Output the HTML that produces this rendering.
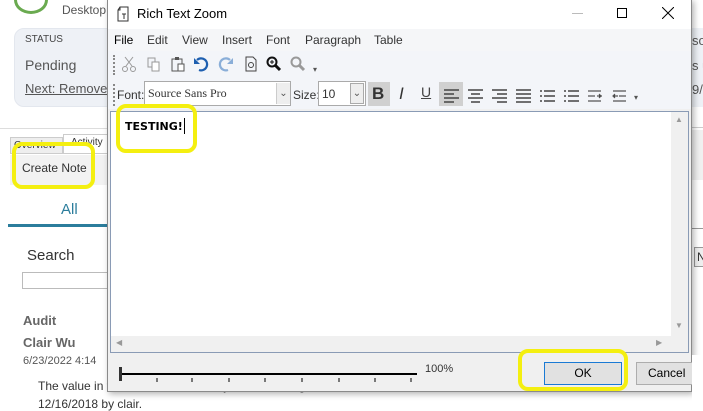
<!DOCTYPE html>
<html><head><meta charset="utf-8"><style>
*{margin:0;padding:0;box-sizing:border-box}
body{width:703px;height:409px;overflow:hidden;background:#fff;font-family:"Liberation Sans",sans-serif;position:relative;color:#333}
.a{position:absolute;white-space:nowrap}
.hl{position:absolute;border:4px solid #f4ef10;border-radius:10px}
.ic{position:absolute;top:56px;width:16px;height:16px}
.tb{position:absolute;top:86px;height:20px}
</style></head><body>
<div class="a" style="left:14px;top:-14px;width:34px;height:28px;border:3px solid #6aaa50;border-radius:50%"></div>
<div class="a" style="left:62px;top:3px;font-size:12px;color:#555">Desktop</div>
<div class="a" style="left:14px;top:28px;width:120px;height:79px;background:#eef1f6;border-radius:10px;border:1px solid #e3e7ee"></div>
<div class="a" style="left:25px;top:34px;font-size:10px;color:#444">STATUS</div>
<div class="a" style="left:25px;top:57px;font-size:14px;color:#555">Pending</div>
<div class="a" style="left:25px;top:81px;font-size:13px;color:#555;text-decoration:underline">Next: Remove</div>
<div class="a" style="left:0;top:128px;width:110px;height:1px;background:#ddd"></div>
<div class="a" style="left:10px;top:137px;width:53px;height:17px;background:#eee;border:1px solid #ccc;font-size:10px;padding:2px 3px">Overview</div>
<div class="a" style="left:63px;top:134px;width:45px;height:20px;background:#fff;border:1px solid #ccc;font-size:10px;padding:2px 7px">Activity</div>
<div class="a" style="left:10px;top:155px;width:100px;height:30px;background:#f2f2f2"></div>
<div class="a" style="left:22px;top:161px;font-size:12px;color:#333">Create Note</div>
<div class="a" style="left:61px;top:201px;font-size:15px;color:#2b7d9c">All</div>
<div class="a" style="left:8px;top:224px;width:100px;height:3px;background:#2b7d9c"></div>
<div class="a" style="left:27px;top:247px;font-size:15px;color:#333">Search</div>
<div class="a" style="left:22px;top:272px;width:90px;height:17px;border:1px solid #bbb"></div>
<div class="a" style="left:23px;top:313px;font-size:13px;font-weight:bold;color:#666">Audit</div>
<div class="a" style="left:23px;top:335px;font-size:13px;font-weight:bold;color:#666">Clair Wu</div>
<div class="a" style="left:23px;top:355px;font-size:11px;color:#555">6/23/2022 4:14</div>
<div class="a" style="left:38px;top:379px;font-size:12px;color:#333">The value in the field Smart Classify Search String has set to the value Submit Incident</div>
<div class="a" style="left:38px;top:397px;font-size:12px;color:#333">12/16/2018 by clair.</div>
<div class="a" style="left:691px;top:28px;width:12px;height:79px;background:#eef1f6"></div>
<div class="a" style="left:692px;top:33px;font-size:13px;color:#555">so</div>
<div class="a" style="left:692px;top:58px;font-size:13px;color:#555">s u</div>
<div class="a" style="left:692px;top:82px;font-size:13px;color:#555">9/</div>
<div class="a" style="left:691px;top:127px;width:12px;height:1px;background:#ccc"></div>
<div class="a" style="left:691px;top:130px;width:12px;height:50px;background:#f0f0f0"></div>
<div class="a" style="left:691px;top:228px;width:12px;height:1px;background:#999"></div>
<div class="a" style="left:694px;top:247px;width:12px;height:20px;border:1px solid #999;background:#eee;font-size:12px;padding:2px">N</div>
<div class="a" style="left:107px;top:-1px;width:585px;height:393px;background:#f0f0f0;border:1px solid #8a8a8a;box-shadow:2px 2px 6px rgba(0,0,0,.3)"></div>
<div class="a" style="left:108px;top:0;width:583px;height:29px;background:#fff"></div>
<svg class="a" style="left:116px;top:6px" width="14" height="16"><path d="M4 1h8v14H2V4z M2 4h2V1" fill="none" stroke="#333"/><path d="M6 8h4M8 8v5" stroke="#333"/></svg>
<div class="a" style="left:137px;top:6px;font-size:13px;color:#000">Rich Text Zoom</div>
<div class="a" style="left:572px;top:13px;width:11px;height:1px;background:#bbb"></div>
<div class="a" style="left:617px;top:8px;width:10px;height:10px;border:1px solid #000"></div>
<svg class="a" style="left:662px;top:7px" width="12" height="12"><path d="M0 0L12 12M12 0L0 12" stroke="#000"/></svg>
<div class="a" style="left:108px;top:29px;width:583px;height:22px;background:#f5f6f8"></div>
<div class="a" style="top:33px;left:114px;font-size:12px;color:#000">File</div>
<div class="a" style="top:33px;left:147px;font-size:12px">Edit</div>
<div class="a" style="top:33px;left:182px;font-size:12px">View</div>
<div class="a" style="top:33px;left:222px;font-size:12px">Insert</div>
<div class="a" style="top:33px;left:266px;font-size:12px">Font</div>
<div class="a" style="top:33px;left:305px;font-size:12px">Paragraph</div>
<div class="a" style="top:33px;left:374px;font-size:12px">Table</div>
<div class="a" style="left:108px;top:51px;width:583px;height:58px;background:#f3f5f9"></div>
<div class="a" style="left:113px;top:55px;height:20px;border-left:2px dotted #888"></div>
<svg class="ic" style="left:121px"><path d="M4 1l7 9M12 1L5 10" stroke="#999"/><circle cx="4" cy="13" r="2.5" fill="none" stroke="#999"/><circle cx="12" cy="13" r="2.5" fill="none" stroke="#999"/></svg>
<svg class="ic" style="left:146px"><rect x="2" y="2" width="7" height="9" fill="none" stroke="#999"/><rect x="6" y="6" width="7" height="9" fill="#fff" stroke="#999"/></svg>
<svg class="ic" style="left:170px"><rect x="2" y="3" width="10" height="12" fill="none" stroke="#555"/><rect x="5" y="1" width="4" height="3" fill="#555"/><rect x="8" y="8" width="6" height="7" fill="#fff" stroke="#555"/></svg>
<svg class="ic" style="left:193px"><path d="M4 4a6 6 0 1 1 2 10" fill="none" stroke="#1e5fb0" stroke-width="2.2"/><path d="M1 2v6h6z" fill="#1e5fb0"/></svg>
<svg class="ic" style="left:218px"><path d="M12 4a6 6 0 1 0-2 10" fill="none" stroke="#8aaed8" stroke-width="2.2"/><path d="M15 2v6H9z" fill="#8aaed8"/></svg>
<svg class="ic" style="left:243px"><path d="M3 1h7l3 3v11H3z" fill="none" stroke="#444"/><circle cx="8" cy="9" r="2.5" fill="none" stroke="#444"/></svg>
<svg class="ic" style="left:266px"><circle cx="6" cy="6" r="4.5" fill="none" stroke="#111" stroke-width="2"/><path d="M9 9l5 5" stroke="#111" stroke-width="3"/><path d="M4 6h4M6 4v4" stroke="#111"/></svg>
<svg class="ic" style="left:290px"><circle cx="6" cy="6" r="4.5" fill="none" stroke="#999" stroke-width="2"/><path d="M9 9l5 5" stroke="#999" stroke-width="3"/></svg>
<div class="a" style="left:313px;top:65px;font-size:8px;color:#555">▾</div>
<div class="a" style="left:113px;top:84px;height:22px;border-left:2px dotted #888"></div>
<div class="a" style="left:117px;top:88px;font-size:12px">Font:</div>
<div class="a" style="left:144px;top:81px;width:147px;height:25px;background:#fff;border:1px solid #aaa"></div>
<div class="a" style="left:148px;top:86px;font-size:12px;font-family:'Liberation Serif',serif">Source Sans Pro</div>
<div class="a" style="left:276px;top:83px;width:14px;height:21px;background:#eee;border-left:1px solid #ccc;font-size:10px;text-align:center;line-height:21px;color:#555">⌄</div>
<div class="a" style="left:293px;top:88px;font-size:12px">Size:</div>
<div class="a" style="left:318px;top:81px;width:48px;height:25px;background:#fff;border:1px solid #aaa"></div>
<div class="a" style="left:322px;top:87px;font-size:12px">10</div>
<div class="a" style="left:350px;top:83px;width:14px;height:21px;background:#eee;border:1px solid #aaa;font-size:10px;text-align:center;line-height:19px;color:#555">⌄</div>
<div class="a" style="left:368px;top:82px;width:22px;height:24px;background:#d0d0d0"></div>
<div class="a" style="left:372px;top:84px;font-size:17px;font-weight:bold;color:#333">B</div>
<div class="a" style="left:399px;top:84px;font-size:17px;font-style:italic;color:#333">I</div>
<div class="a" style="left:421px;top:84px;font-size:14px;text-decoration:underline;color:#444">U</div>
<div class="a" style="left:439px;top:82px;width:24px;height:24px;background:#d0d0d0"></div>
<svg class="tb" style="left:443px" width="150" height="20">
<g stroke="#444" stroke-width="1.6">
<path d="M1 4h15M1 8h10M1 12h15M1 16h10"/>
<path d="M25 4h15M28 8h9M25 12h15M28 16h9"/>
<path d="M49 4h15M54 8h10M49 12h15M54 16h10"/>
<path d="M73 4h15M73 8h15M73 12h15M73 16h15"/>
<path d="M97 5h2M101 5h11M97 10h2M101 10h11M97 15h2M101 15h11"/>
<path d="M121 5h2M125 5h11M121 10h2M125 10h11M121 15h2M125 15h11"/>
</g></svg>
<svg class="tb" style="left:587px" width="50" height="20"><g stroke="#555" stroke-width="1.2"><path d="M1 5h13M1 10h7M1 15h13M10 10h5M12 8l2 2-2 2"/><path d="M26 5h13M32 10h7M26 15h13M26 10h5M28 8l-2 2 2 2"/></g></svg>
<div class="a" style="left:634px;top:93px;font-size:8px;color:#555">▾</div>
<div class="a" style="left:110px;top:111px;width:579px;height:242px;background:#fff;border:1px solid #8a9bb5"></div>
<div class="a" style="left:671px;top:112px;width:17px;height:224px;background:#f0f0f0"></div>
<div class="a" style="left:675px;top:115px;font-size:8px;color:#999">▲</div>
<div class="a" style="left:675px;top:321px;font-size:8px;color:#999">▼</div>
<div class="a" style="left:111px;top:336px;width:577px;height:16px;background:#f0f0f0"></div>
<div class="a" style="left:116px;top:338px;font-size:8px;color:#999">◀</div>
<div class="a" style="left:656px;top:338px;font-size:8px;color:#999">▶</div>
<div class="a" style="left:125px;top:118px;font-size:11px;font-weight:bold;color:#000;font-family:'DejaVu Sans',sans-serif">TESTING!<span style="display:inline-block;width:1px;height:16px;background:#000;vertical-align:-4px;margin-left:1px"></span></div>
<div class="a" style="left:121px;top:373px;width:296px;height:2px;background:#000"></div>
<div class="a" style="left:119px;top:367px;width:3px;height:14px;background:#333"></div>
<svg class="a" style="left:120px;top:378px" width="300" height="6"><g stroke="#000"><path d="M37 0v4M72 0v4M109 0v4M145 0v4M182 0v4M219 0v4M255 0v4M291 0v4"/></g></svg>
<div class="a" style="left:425px;top:363px;font-size:11px;color:#333">100%</div>
<div class="a" style="left:544px;top:362px;width:78px;height:23px;background:#e1e1e1;border:1px solid #1a7ad4;font-size:12px;text-align:center;line-height:21px;color:#000">OK</div>
<div class="a" style="left:636px;top:362px;width:60px;height:23px;background:#e1e1e1;border:1px solid #adadad;font-size:12px;line-height:21px;padding-left:11px;color:#000">Cancel</div>
<div class="a" style="left:692px;top:355px;width:11px;height:54px;background:#fff"></div>
<div class="hl" style="left:116px;top:104px;width:81px;height:49px"></div>
<div class="hl" style="left:12px;top:142px;width:83px;height:47px"></div>
<div class="hl" style="left:518px;top:349px;width:110px;height:42px"></div>
</body></html>
